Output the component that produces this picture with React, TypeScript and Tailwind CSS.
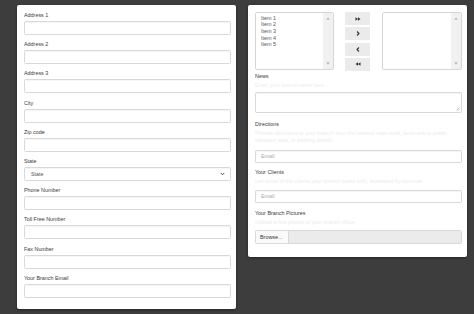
import React from "react";

const font = "font-['Liberation_Sans',Arial,sans-serif]";

function Field({ label, select }: { label: string; select?: boolean }) {
  return (
    <div className="mb-[5.2px]">
      <div className="h-[8px] leading-[8px] text-[5.4px] text-[#3a3a3a]">{label}</div>
      {select ? (
        <div className="mt-[2px] h-[14px] rounded-[1.5px] border border-[#d9d9d9] flex items-center justify-between pl-[6px] pr-[5px] text-[5.4px] text-[#555] shadow-[inset_0_1px_1px_rgba(0,0,0,0.04)]">
          <span>State</span>
          <svg width="5" height="4" viewBox="0 0 10 8">
            <path d="M1.5 2 L5 5.5 L8.5 2" stroke="#333" strokeWidth="1.8" fill="none" />
          </svg>
        </div>
      ) : (
        <div className="mt-[2px] h-[14px] rounded-[1.5px] border border-[#d9d9d9] shadow-[inset_0_1px_1px_rgba(0,0,0,0.04)]" />
      )}
    </div>
  );
}

function ListBox({ items }: { items: string[] }) {
  return (
    <div className="h-[58px] rounded-[2px] border border-[#d5d5d5] flex overflow-hidden">
      <div className="flex-1 pl-[5px] pt-[1.5px] text-[5.4px] leading-[6.7px] text-[#555]">
        {items.map((i) => (
          <div key={i}>{i}</div>
        ))}
      </div>
      <div className="w-[10px] bg-[#f1f1f1] flex flex-col items-center justify-between py-[4px]">
        <svg width="4" height="3" viewBox="0 0 8 6">
          <path d="M4 1 L7 5 L1 5 Z" fill="#a3a3a3" />
        </svg>
        <svg width="4" height="3" viewBox="0 0 8 6">
          <path d="M1 1 L7 1 L4 5 Z" fill="#a3a3a3" />
        </svg>
      </div>
    </div>
  );
}

function MoveBtn({ children }: { children: React.ReactNode }) {
  return (
    <div className="h-[13px] w-[25px] bg-[#ebebeb] flex items-center justify-center">{children}</div>
  );
}

function Label({ children, className = "" }: { children: React.ReactNode; className?: string }) {
  return <div className={`h-[8px] leading-[8px] text-[5.4px] text-[#3a3a3a] ${className}`}>{children}</div>;
}

function Help({ children, className = "" }: { children: React.ReactNode; className?: string }) {
  return <div className={`leading-[7.3px] text-[5.4px] text-[#ececec] ${className}`}>{children}</div>;
}

function EmailInput({ className = "" }: { className?: string }) {
  return (
    <div
      className={`h-[13px] rounded-[1.5px] border border-[#d9d9d9] flex items-center pl-[5px] text-[5.4px] text-[#a8a8a8] shadow-[inset_0_1px_1px_rgba(0,0,0,0.04)] ${className}`}
    >
      Email
    </div>
  );
}

export default function App() {
  return (
    <div className={`w-[474px] h-[314px] bg-[#3d3d3d] flex items-start ${font}`}>
      {/* Left card */}
      <div className="ml-[17px] mt-[5px] w-[219px] h-[304px] bg-white rounded-[2px] shadow-[0_1px_3px_rgba(0,0,0,0.4)] pt-[6px] pl-[7px] pr-[5px]">
        <Field label="Address 1" />
        <Field label="Address 2" />
        <Field label="Address 3" />
        <Field label="City" />
        <Field label="Zip code" />
        <Field label="State" select />
        <Field label="Phone Number" />
        <Field label="Toll Free Number" />
        <Field label="Fax Number" />
        <Field label="Your Branch Email" />
      </div>

      {/* Right card */}
      <div className="ml-[12px] mt-[5px] w-[219px] h-[252px] bg-white rounded-[2px] shadow-[0_1px_3px_rgba(0,0,0,0.4)] pt-[7px] pl-[7px] pr-[5px]">
        <div className="flex items-start">
          <div className="w-[79px]">
            <ListBox items={["Item 1", "Item 2", "Item 3", "Item 4", "Item 5"]} />
          </div>
          <div className="ml-[11px] flex flex-col gap-[2.3px]">
            <MoveBtn>
              <svg width="6" height="4" viewBox="0 0 12 8">
                <path d="M1 0.5 L6 4 L1 7.5 Z M6 0.5 L11 4 L6 7.5 Z" fill="#333" />
              </svg>
            </MoveBtn>
            <MoveBtn>
              <svg width="4" height="5" viewBox="0 0 8 10">
                <path d="M2 1 L6 5 L2 9" stroke="#333" strokeWidth="2.2" fill="none" />
              </svg>
            </MoveBtn>
            <MoveBtn>
              <svg width="4" height="5" viewBox="0 0 8 10">
                <path d="M6 1 L2 5 L6 9" stroke="#333" strokeWidth="2.2" fill="none" />
              </svg>
            </MoveBtn>
            <MoveBtn>
              <svg width="6" height="4" viewBox="0 0 12 8">
                <path d="M11 0.5 L6 4 L11 7.5 Z M6 0.5 L1 4 L6 7.5 Z" fill="#333" />
              </svg>
            </MoveBtn>
          </div>
          <div className="ml-[12px] w-[80px]">
            <ListBox items={[]} />
          </div>
        </div>

        <Label className="mt-[1px]">News</Label>
        <Help className="mt-[2px] w-fit">Enter your branch news here</Help>
        <div className="mt-[3px] h-[21px] rounded-[1.5px] border border-[#d9d9d9] relative shadow-[inset_0_1px_1px_rgba(0,0,0,0.04)]">
          <svg className="absolute right-[1px] bottom-[1px]" width="5" height="5" viewBox="0 0 10 10">
            <path d="M9 3 L3 9 M9 6 L6 9" stroke="#888" strokeWidth="1" />
          </svg>
        </div>

        <Label className="mt-[6.7px]">Directions</Label>
        <Help className="mt-[2.3px]">
          Provide directions to your branch from the nearest main road, landmark or public transport stop, or
          parking details
        </Help>
        <EmailInput className="mt-[5px]" />

        <Label className="mt-[5.7px]">Your Clients</Label>
        <Help className="mt-[2px]">List some of the clients your branch works with, separated by commas</Help>
        <EmailInput className="mt-[4px]" />

        <Label className="mt-[6px]">Your Branch Pictures</Label>
        <Help className="mt-[2px]">Upload a few photos of your branch office</Help>
        <div className="mt-[4px] h-[13.7px] rounded-[1.5px] border border-[#d9d9d9] flex overflow-hidden">
          <div className="w-[33px] bg-[#fafafa] border-r border-[#d9d9d9] flex items-center pl-[4px] text-[5.4px] text-[#333]">
            Browse...
          </div>
          <div className="flex-1 bg-[#ebebeb]" />
        </div>
      </div>
    </div>
  );
}
